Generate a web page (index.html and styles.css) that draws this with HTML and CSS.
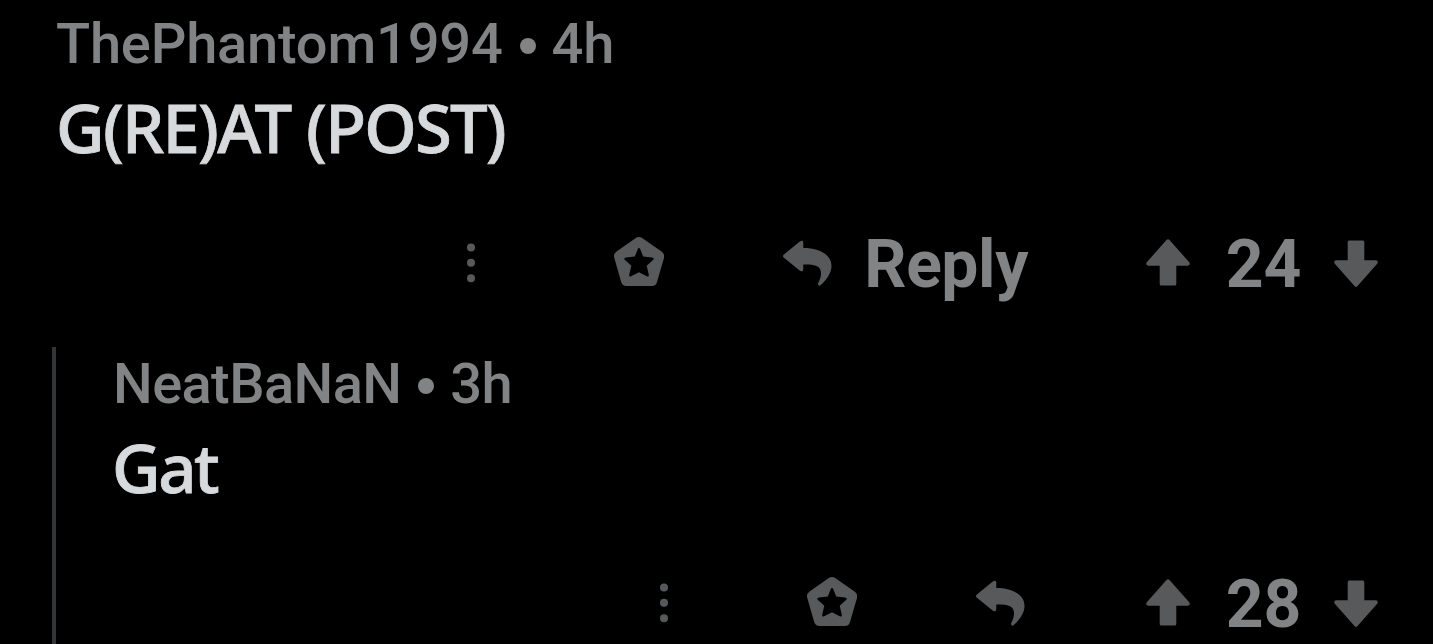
FILE: index.html
```
<!DOCTYPE html>
<html lang="en">
<head>
    <meta charset="UTF-8">
    <meta name="viewport" content="width=device-width, initial-scale=1.0">
    <title>Comments</title>
    <link rel="stylesheet" href="styles.css">
</head>
<body>
    <!-- shared icons -->
    <svg class="sprite" width="0" height="0">
        <symbol id="dots" viewBox="0 0 8 40">
            <circle cx="4" cy="4.5" r="4"/>
            <circle cx="4" cy="19.8" r="4"/>
            <circle cx="4" cy="35.3" r="4"/>
        </symbol>
        <symbol id="award" viewBox="0 0 50 52">
            <path fill-rule="evenodd" d="M21.5 1.2Q25-1 28.500 1.200L47.500 14.500Q51 17 50 21L43 45Q42 49 38 49H12.500Q8.500 49 7.200 45L.3 21Q-.8 17 2.500 14.500ZM25 11Q24.200 11 23.700 12.200L20.800 19.600L12 20.500Q9 21.200 11 23L17.300 28.800L15.200 37.800Q15 40.300 17.200 39.200L25 35.200L32.800 39.200Q35 40.300 34.800 37.800L32.700 28.800L39 23Q41 21.200 38 20.500L29.200 19.600L26.300 12.200Q25.800 11 25 11Z"/>
        </symbol>
        <symbol id="reply" viewBox="0 0 49 46">
            <path d="M.6 14.800L16.800 1.600Q20.300-.5 20.300 3V8C35 8 48.500 14 48.500 26C48.500 33 43.500 40 37.500 45.300Q35 46.500 35 43.500C38 38 39 33 37 29C34.500 25 29 24.600 20.300 24.600V28.500Q20.300 32.500 17 30.700L.6 17.500Q-.6 16.200.6 14.800Z"/>
        </symbol>
        <symbol id="arrow" viewBox="0 0 44 48">
            <path d="M20.700.8Q22-.4 23.300.8L43.200 23.200Q45 26.300 41.700 26.700H30.300V45Q30.300 46.500 28.800 46.500H15.200Q13.700 46.500 13.700 45V26.700H2.300Q-1 26.300.8 23.200Z"/>
        </symbol>
    </svg>

    <div class="comment">
        <div class="author">ThePhantom1994<span class="dot"></span>4h</div>
        <p class="text">G(RE)AT (POST)</p>
        <div class="actions">
            <svg class="more"><use href="#dots"/></svg>
            <svg class="award"><use href="#award"/></svg>
            <div class="reply wide">
                <svg><use href="#reply"/></svg>
                <span class="label">Reply</span>
            </div>
            <div class="votes">
                <svg><use href="#arrow"/></svg>
                <span class="count">24</span>
                <svg class="down"><use href="#arrow"/></svg>
            </div>
        </div>
    </div>

    <div class="comment child">
        <div class="author neat">NeatBaNaN<span class="dot"></span>3h</div>
        <p class="text gat">Gat</p>
        <div class="actions">
            <svg class="more"><use href="#dots"/></svg>
            <svg class="award"><use href="#award"/></svg>
            <div class="reply">
                <svg><use href="#reply"/></svg>
            </div>
            <div class="votes">
                <svg><use href="#arrow"/></svg>
                <span class="count">28</span>
                <svg class="down"><use href="#arrow"/></svg>
            </div>
        </div>
    </div>
</body>
</html>
```
FILE: styles.css
```
body{
    margin: 0;
    background-color: #000;
    font-family: Roboto, "Liberation Sans", sans-serif;
    overflow: hidden;
}
.sprite{
    display: block;
}
.comment{
    box-sizing: border-box;
    height: 347px;
    padding: 14px 55px 0 56px;
}
.child{
    height: 297px;
    margin-left: 52px;
    padding: 7px 55px 0 56px;
    border-left: 4px solid #343536;
}
.author{
    display: flex;
    align-items: center;
    font-size: 56px;
    font-weight: 500;
    line-height: 60px;
    letter-spacing: -0.2px;
    color: #818384;
    white-space: nowrap;
}
.neat{
    padding-left: 1px;
    letter-spacing: -0.6px;
}
.dot{
    width: 16px;
    height: 16px;
    margin: 3px 16px 0 17px;
    border-radius: 50%;
    background-color: #818384;
}
.text{
    margin: 13px 0 0;
    font-family: "Noto Sans", sans-serif;
    font-size: 67px;
    font-weight: 500;
    line-height: 80px;
    letter-spacing: -1.8px;
    color: #d7dadc;
    white-space: nowrap;
    -webkit-text-stroke: 0.8px #d7dadc;
}
.gat{
    letter-spacing: -2.5px;
}
.actions{
    display: flex;
    justify-content: flex-end;
    align-items: center;
    height: 80px;
    margin-top: 56px;
    fill: #58595b;
}
.more{
    width: 8px;
    height: 40px;
    margin-right: 139px;
}
.award{
    width: 50px;
    height: 52px;
    margin-right: 119px;
}
.reply{
    display: flex;
    justify-content: space-between;
    align-items: center;
    width: 52px;
    margin-right: 118px;
}
.reply svg{
    width: 49px;
    height: 46px;
}
.wide{
    width: 245px;
}
.label, .count{
    padding-top: 3px;
    font-size: 66px;
    font-weight: 700;
    line-height: 80px;
    color: #818384;
}
.label{
    letter-spacing: -0.4px;
}
.count{
    padding-left: 3px;
}
.votes{
    display: grid;
    grid-template-columns: 44px 144px 44px;
    align-items: center;
    text-align: center;
}
.votes svg{
    width: 44px;
    height: 48px;
}
.down{
    transform: rotate(180deg);
}
```
